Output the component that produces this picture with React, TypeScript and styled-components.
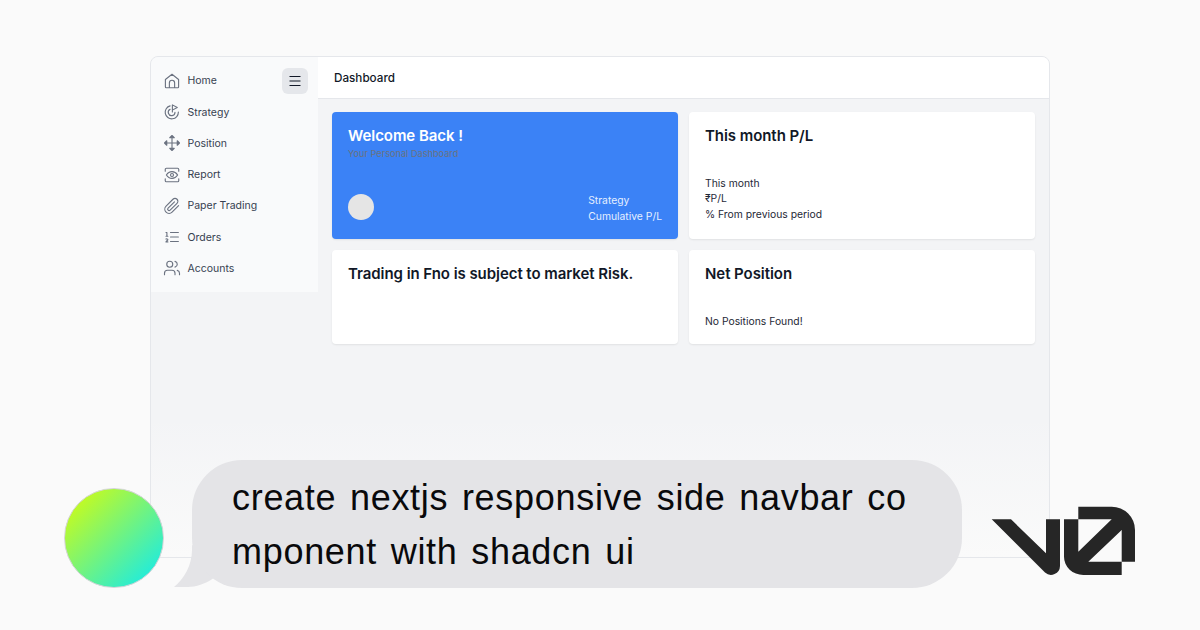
import React, { FC, ReactNode } from 'react'
import styled, { createGlobalStyle } from 'styled-components'

const GlobalStyle = createGlobalStyle`
  html, body {
    margin: 0;
    padding: 0;
    background: #fafafa;
  }
  * {
    box-sizing: border-box;
  }
`

const Page = styled.div`
  position: relative;
  width: 1200px;
  height: 630px;
  padding: 56px 150px 72px;
  overflow: hidden;
  background: #fafafa;
  font-family: Inter, 'Liberation Sans', sans-serif;
`

const Frame = styled.div`
  position: relative;
  display: flex;
  height: 502px;
  border: 1px solid #e5e7eb;
  border-radius: 8px;
  overflow: hidden;
  background: #f3f4f6;
`

const Fade = styled.div`
  position: absolute;
  left: 0;
  right: 0;
  bottom: 0;
  height: 140px;
  background: linear-gradient(to bottom, rgba(250, 250, 250, 0), #fafafa);
`

const Sidebar = styled.nav`
  flex: none;
  width: 167px;
  height: 235px;
  padding: 8.3px 0 0 12px;
  display: flex;
  flex-direction: column;
  background: #f9fafb;
`

const NavRow = styled.div`
  display: flex;
  align-items: center;
  gap: 6.5px;
  height: 31.25px;
  font-size: 10.5px;
  color: #374151;

  svg {
    flex: none;
    width: 18px;
    height: 18px;
    fill: none;
    stroke: #6b7280;
    stroke-width: 1.5;
    stroke-linecap: round;
    stroke-linejoin: round;
  }
`

const Toggle = styled.div`
  position: absolute;
  left: 131px;
  top: 11px;
  width: 26px;
  height: 26px;
  border-radius: 6px;
  background: #e5e7eb;
  display: flex;
  align-items: center;
  justify-content: center;

  svg {
    width: 16px;
    height: 16px;
    fill: none;
    stroke: #111827;
    stroke-width: 1;
  }
`

const Main = styled.div`
  flex: 1;
  display: flex;
  flex-direction: column;
`

const Header = styled.header`
  height: 42px;
  padding: 0 16px;
  display: flex;
  align-items: center;
  background: #fff;
  border-bottom: 1px solid #e5e7eb;
  font-size: 11.7px;
  font-weight: 500;
  color: #111827;
`

const Grid = styled.div`
  display: grid;
  grid-template-columns: 346px 346px;
  grid-template-rows: 127px 94px;
  gap: 11px;
  padding: 13px 0 0 14px;
`

const Card = styled.section<{ $blue?: boolean }>`
  position: relative;
  display: flex;
  flex-direction: column;
  padding: 16px;
  border-radius: 4px;
  background: ${p => (p.$blue ? '#3b82f6' : '#fff')};
  box-shadow: 0 1px 2px rgba(0, 0, 0, 0.08);
  color: ${p => (p.$blue ? '#fff' : '#111827')};
`

const Title = styled.h2`
  margin: 0;
  font-size: 15px;
  line-height: 16px;
  font-weight: 600;
  letter-spacing: -0.06px;
`

const Muted = styled.p`
  margin: 3px 0 0;
  font-size: 9.2px;
  line-height: 14px;
  color: #6b7280;
`

const CardFoot = styled.div`
  margin-top: auto;
  display: flex;
  align-items: flex-end;
  justify-content: space-between;
`

const Avatar = styled.div`
  width: 26px;
  height: 26px;
  margin-bottom: 3px;
  border-radius: 50%;
  background: #e5e5e5;
`

const Lines = styled.div<{ $light?: boolean; $lift: number }>`
  font-size: 10.35px;
  line-height: 15.5px;
  margin-bottom: ${p => p.$lift}px;
  color: ${p => (p.$light ? '#e5efff' : '#1f2937')};
`

const Bubble = styled.div`
  position: absolute;
  left: 192px;
  top: 460px;
  width: 770px;
  height: 128px;
  padding: 11px 40px;
  border-radius: 50px;
  background: #e4e4e7;
  color: #09090b;
  font-family: 'Liberation Sans', Arial, sans-serif;
  font-size: 36px;
  line-height: 54px;
  letter-spacing: 0.7px;
  word-spacing: 3px;
  word-break: break-all;
`

const Tail = styled.svg`
  position: absolute;
  left: 172px;
  top: 545px;
  width: 60px;
  height: 43px;
  fill: #e4e4e7;
`

const Orb = styled.div`
  position: absolute;
  left: 64px;
  top: 488px;
  width: 100px;
  height: 100px;
  border-radius: 50%;
  border: 1px solid #d4d4d8;
  background: linear-gradient(135deg, #c8fb1c 10%, #22ecdb 88%);
`

const Logo = styled.svg`
  position: absolute;
  left: 990px;
  top: 506px;
  width: 146px;
  height: 71px;
  fill: #262626;
`

const navItems: { label: string; icon: ReactNode }[] = [
  {
    label: 'Home',
    icon: <path d="M3.200 10 12 3l8.800 7v10a1 1 0 0 1-1 1H4.200a1 1 0 0 1-1-1zM8.500 21v-6.500a3.500 3.500 0 0 1 7 0V21" />,
  },
  {
    label: 'Strategy',
    icon: (
      <>
        <path d="M9.500 3.800a8.800 8.800 0 1 0 11 8.200" />
        <path d="M9.500 8.300a4.500 4.500 0 1 0 6.500 4" />
        <path d="M12.500 12V2.500l6.500 3.500-6.500 3.500" />
      </>
    ),
  },
  {
    label: 'Position',
    icon: <path d="M5 9l-3 3 3 3zM9 5l3-3 3 3zM15 19l-3 3-3-3zM19 9l3 3-3 3zM2 12h20M12 2v20" />,
  },
  {
    label: 'Report',
    icon: (
      <>
        <path d="M3 7V4.500a1.500 1.500 0 0 1 1.500-1.500h15A1.500 1.500 0 0 1 21 4.500V7M3 17v2.500A1.500 1.500 0 0 0 4.500 21h15a1.500 1.500 0 0 0 1.500-1.500V17" />
        <path d="M4.500 12s2.800-4.500 7.500-4.500 7.500 4.500 7.500 4.500-2.800 4.500-7.500 4.500S4.500 12 4.500 12z" />
        <circle cx="12" cy="12" r="2" />
      </>
    ),
  },
  {
    label: 'Paper Trading',
    icon: (
      <path d="m20.800 11.500-8.700 8.700a5.500 5.500 0 0 1-8-8l9.200-9.200a3.800 3.800 0 0 1 5.400 5.400l-9.200 9.200a1.900 1.900 0 0 1-2.700-2.700l8.500-8.500" />
    ),
  },
  {
    label: 'Orders',
    icon: <path d="M10 6h10.500M10 12h10.500M10 18h10.500M4 6h1.200v4.500M4 11h2.500M6.500 18.500H4c0-1.300 2.500-1.500 2.500-3 0-1-1.500-1.200-2.500-.7" />,
  },
  {
    label: 'Accounts',
    icon: (
      <>
        <path d="M16 21v-2a4 4 0 0 0-4-4H6a4 4 0 0 0-4 4v2" />
        <circle cx="9" cy="7" r="4" />
        <path d="M22 21v-2a4 4 0 0 0-3-3.870M16 3.130a4 4 0 0 1 0 7.750" />
      </>
    ),
  },
]

const NavItem: FC<{ label: string; icon: ReactNode }> = ({ label, icon }) => (
  <NavRow>
    <svg viewBox="0 0 24 24">{icon}</svg>
    {label}
  </NavRow>
)

export default function App() {
  return (
    <Page>
      <GlobalStyle />
      <Frame>
        <Sidebar>
          {navItems.map(item => (
            <NavItem key={item.label} label={item.label} icon={item.icon} />
          ))}
        </Sidebar>
        <Toggle>
          <svg viewBox="0 0 16 16">
            <path d="M2.500 3.500h11M2.500 8h11M2.500 12.500h11" />
          </svg>
        </Toggle>
        <Main>
          <Header>Dashboard</Header>
          <Grid>
            <Card $blue>
              <Title>Welcome Back !</Title>
              <Muted>Your Personal Dashboard</Muted>
              <CardFoot>
                <Avatar />
                <Lines $light $lift={-1}>
                  <div>Strategy</div>
                  <div>Cumulative P/L</div>
                </Lines>
              </CardFoot>
            </Card>
            <Card>
              <Title>This month P/L</Title>
              <CardFoot>
                <Lines $lift={1}>
                  <div>This month</div>
                  <div>₹P/L</div>
                  <div>% From previous period</div>
                </Lines>
              </CardFoot>
            </Card>
            <Card>
              <Title>Trading in Fno is subject to market Risk.</Title>
            </Card>
            <Card>
              <Title>Net Position</Title>
              <CardFoot>
                <Lines $lift={-1}>No Positions Found!</Lines>
              </CardFoot>
            </Card>
          </Grid>
        </Main>
        <Fade />
      </Frame>
      <Orb />
      <Tail viewBox="0 0 60 43">
        <path d="M20 0V5C20 20 12 34 2 42H16C24 42 33 39 41 33.500V10Z" />
      </Tail>
      <Bubble>create nextjs responsive side navbar component with shadcn ui</Bubble>
      <Logo viewBox="0 0 146 71">
        <path d="M1.700 13.300H21L56 47.300V13.300H70V60A9 9 0 0 1 55 66.500Z" />
        <path d="M74 13.300H88.300V45.700L121.700 13.300H88.300V.7H121.700A23.300 23.300 0 0 1 145 24V55.700H131.700V24L98.300 55.700H131.700V69H93.300A19.300 18.300 0 0 1 74 50.700Z" />
      </Logo>
    </Page>
  )
}
